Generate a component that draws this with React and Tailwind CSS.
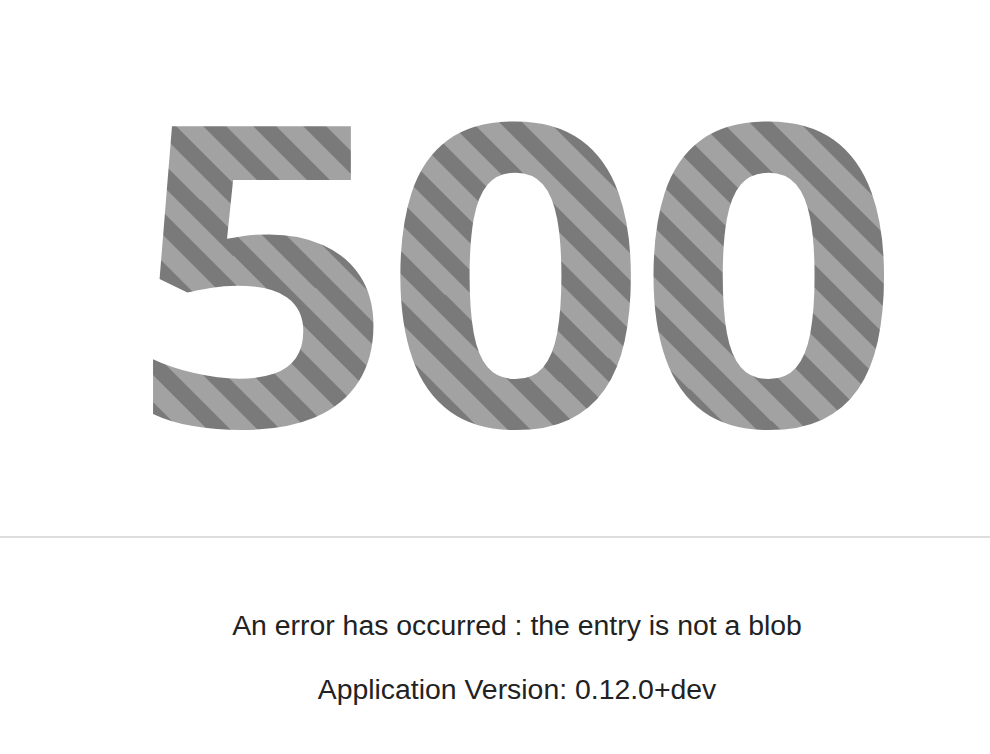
import React from "react";

const ErrorPage = () => {
  return (
    <div className="w-full min-h-screen bg-white flex flex-col">
      <div className="h-[536px] flex items-center justify-center pl-[30px]">
        <h1
          className="text-[420px] leading-none font-bold tracking-[-10px] scale-x-[1.1] text-transparent bg-clip-text bg-[repeating-linear-gradient(47.7deg,#a2a2a2_0px,#a2a2a2_13.7px,#7a7a7a_13.7px,#7a7a7a_29.2px,#a2a2a2_29.2px,#a2a2a2_33.6px)] select-none -mt-[10px]"
          style={{ fontFamily: '"Open Sans", sans-serif' }}
        >
          500
        </h1>
      </div>
      <div className="border-t-2 border-[#dddddd]" />
      <div
        className="flex flex-col items-center text-[28.4px] text-[#222222] pt-[72px] gap-[34px] pl-[44px]"
        style={{ fontFamily: '"Liberation Sans", Arial, sans-serif' }}
      >
        <p className="leading-[30px]">An error has occurred : the entry is not a blob</p>
        <p className="leading-[30px]">Application Version: 0.12.0+dev</p>
      </div>
    </div>
  );
};

export default function App() {
  return <ErrorPage />;
}
